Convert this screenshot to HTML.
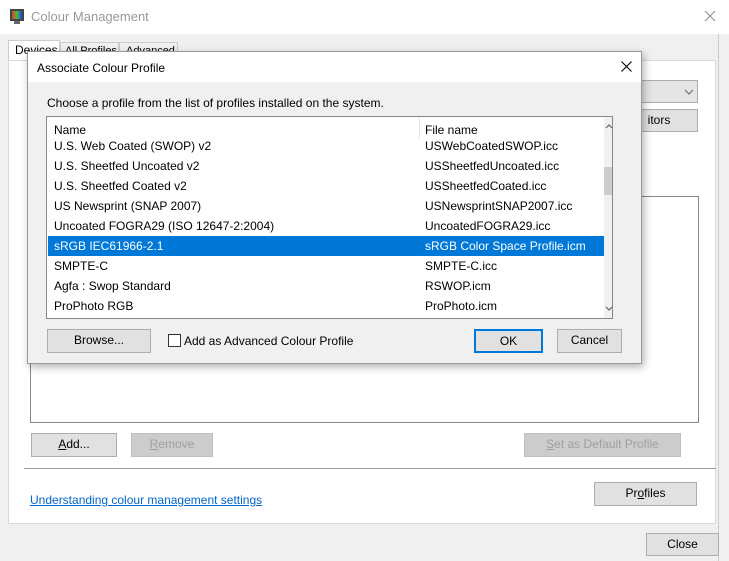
<!DOCTYPE html>
<html><head><style>
*{box-sizing:border-box;margin:0;padding:0}
body{width:729px;height:561px;overflow:hidden;background:#f0f0f0;font-family:"Liberation Sans",sans-serif;font-size:12px;color:#000;position:relative;white-space:nowrap}
.a{position:absolute}
.btn{position:absolute;background:#e1e1e1;border:1px solid #adadad;text-align:center;line-height:21px;font-size:12px}
.dis{color:#a0a0a0;background:#cccccc;border-color:#bfbfbf}
.row{position:absolute;left:48px;width:556px;height:20px;line-height:20px}
.row span{position:absolute}
.row .n{left:6px}.row .f{left:377px}
</style></head><body>
<div class="a" style="left:0;top:0;width:729px;height:34px;background:#fff"></div>
<div class="a" style="left:10px;top:9px;width:14px;height:12px;background:linear-gradient(90deg,#e33,#3c3,#33e);border:2px solid #444"></div>
<div class="a" style="left:14px;top:21px;width:6px;height:3px;background:#666"></div>
<div class="a" style="left:31px;top:9px;color:#999;font-size:13px">Colour Management</div>
<svg class="a" style="left:704px;top:10px" width="12" height="12"><path d="M1 1L11 11M11 1L1 11" stroke="#888" stroke-width="1"/></svg>
<div class="a" style="left:718px;top:34px;width:1px;height:527px;background:#ccc"></div>
<div class="a" style="left:8px;top:40px;width:52px;height:22px;background:#fff;border:1px solid #ccc;border-bottom:none;padding:2px 0 0 6px">Devices</div>
<div class="a" style="left:60px;top:42px;width:59px;height:18px;border:1px solid #ccc;padding:2px 0 0 4px;font-size:11px">All Profiles</div>
<div class="a" style="left:119px;top:42px;width:59px;height:18px;border:1px solid #ccc;padding:2px 0 0 6px;font-size:11px">Advanced</div>
<div class="a" style="left:8px;top:60px;width:708px;height:464px;background:#fff;border:1px solid #d9d9d9"></div>
<div class="a" style="left:620px;top:80px;width:78px;height:23px;background:#e5e5e5;border:1px solid #adadad"><svg class="a" style="left:63px;top:8px" width="10" height="6"><path d="M1 1L5 5L9 1" stroke="#666" fill="none"/></svg></div>
<div class="btn" style="left:620px;top:109px;width:78px;height:23px">itors</div>
<div class="a" style="left:30px;top:196px;width:669px;height:227px;border:1px solid #828790;background:#fff"></div>
<div class="btn" style="left:31px;top:433px;width:86px;height:24px"><u>A</u>dd...</div>
<div class="btn dis" style="left:131px;top:433px;width:82px;height:24px"><u>R</u>emove</div>
<div class="btn dis" style="left:524px;top:433px;width:157px;height:24px"><u>S</u>et as Default Profile</div>
<div class="a" style="left:24px;top:468px;width:692px;height:1px;background:#a0a0a0"></div>
<div class="a" style="left:30px;top:493px;color:#0066cc;text-decoration:underline">Understanding colour management settings</div>
<div class="btn" style="left:594px;top:482px;width:103px;height:24px">Pr<u>o</u>files</div>
<div class="btn" style="left:646px;top:533px;width:73px;height:23px">Close</div>

<div class="a" style="left:27px;top:51px;width:615px;height:313px;background:#f0f0f0;border:1px solid #999;box-shadow:2px 3px 8px rgba(0,0,0,.3)">
<div class="a" style="left:0;top:0;width:613px;height:30px;background:#fff"></div>
<div class="a" style="left:9px;top:9px;font-size:12px">Associate Colour Profile</div>
<svg class="a" style="left:593px;top:9px" width="11" height="11"><path d="M0.5 0.5L10.5 10.5M10.5 0.5L0.5 10.5" stroke="#000" stroke-width="1.1"/></svg>
<div class="a" style="left:19px;top:44px">Choose a profile from the list of profiles installed on the system.</div>
</div>
<div class="a" style="left:46px;top:116px;width:567px;height:203px;border:1px solid #828790;background:#fff;overflow:hidden">
<div class="a" style="left:7px;top:6px">Name</div>
<div class="a" style="left:372px;top:0;width:1px;height:22px;background:#e5e5e5"></div>
<div class="a" style="left:378px;top:6px">File name</div>
<div class="a" style="left:557px;top:0;width:9px;height:201px;background:#f0f0f0"></div>
<div class="a" style="left:557px;top:50px;width:16px;height:28px;background:#cdcdcd"></div>
<svg class="a" style="left:558px;top:6px" width="8" height="6"><path d="M1 5L4 2L7 5" stroke="#555" fill="none"/></svg>
<svg class="a" style="left:558px;top:189px" width="8" height="6"><path d="M1 1L4 4L7 1" stroke="#555" fill="none"/></svg>
</div>
<div class="row" style="top:136px"><span class="n">U.S. Web Coated (SWOP) v2</span><span class="f">USWebCoatedSWOP.icc</span></div>
<div class="row" style="top:156px"><span class="n">U.S. Sheetfed Uncoated v2</span><span class="f">USSheetfedUncoated.icc</span></div>
<div class="row" style="top:176px"><span class="n">U.S. Sheetfed Coated v2</span><span class="f">USSheetfedCoated.icc</span></div>
<div class="row" style="top:196px"><span class="n">US Newsprint (SNAP 2007)</span><span class="f">USNewsprintSNAP2007.icc</span></div>
<div class="row" style="top:216px"><span class="n">Uncoated FOGRA29 (ISO 12647-2:2004)</span><span class="f">UncoatedFOGRA29.icc</span></div>
<div class="row" style="top:236px;background:#0078d7;color:#fff"><span class="n">sRGB IEC61966-2.1</span><span class="f">sRGB Color Space Profile.icm</span></div>
<div class="row" style="top:256px"><span class="n">SMPTE-C</span><span class="f">SMPTE-C.icc</span></div>
<div class="row" style="top:276px"><span class="n">Agfa : Swop Standard</span><span class="f">RSWOP.icm</span></div>
<div class="row" style="top:296px;height:21px"><span class="n">ProPhoto RGB</span><span class="f">ProPhoto.icm</span></div>
<div class="btn" style="left:47px;top:329px;width:104px;height:24px">Browse...</div>
<div class="a" style="left:168px;top:334px;width:13px;height:13px;border:1px solid #333;background:#fff"></div>
<div class="a" style="left:184px;top:334px">Add as Advanced Colour Profile</div>
<div class="btn" style="left:474px;top:329px;width:69px;height:24px;border:2px solid #0078d7;line-height:20px">OK</div>
<div class="btn" style="left:557px;top:329px;width:65px;height:24px">Cancel</div>
</body></html>
